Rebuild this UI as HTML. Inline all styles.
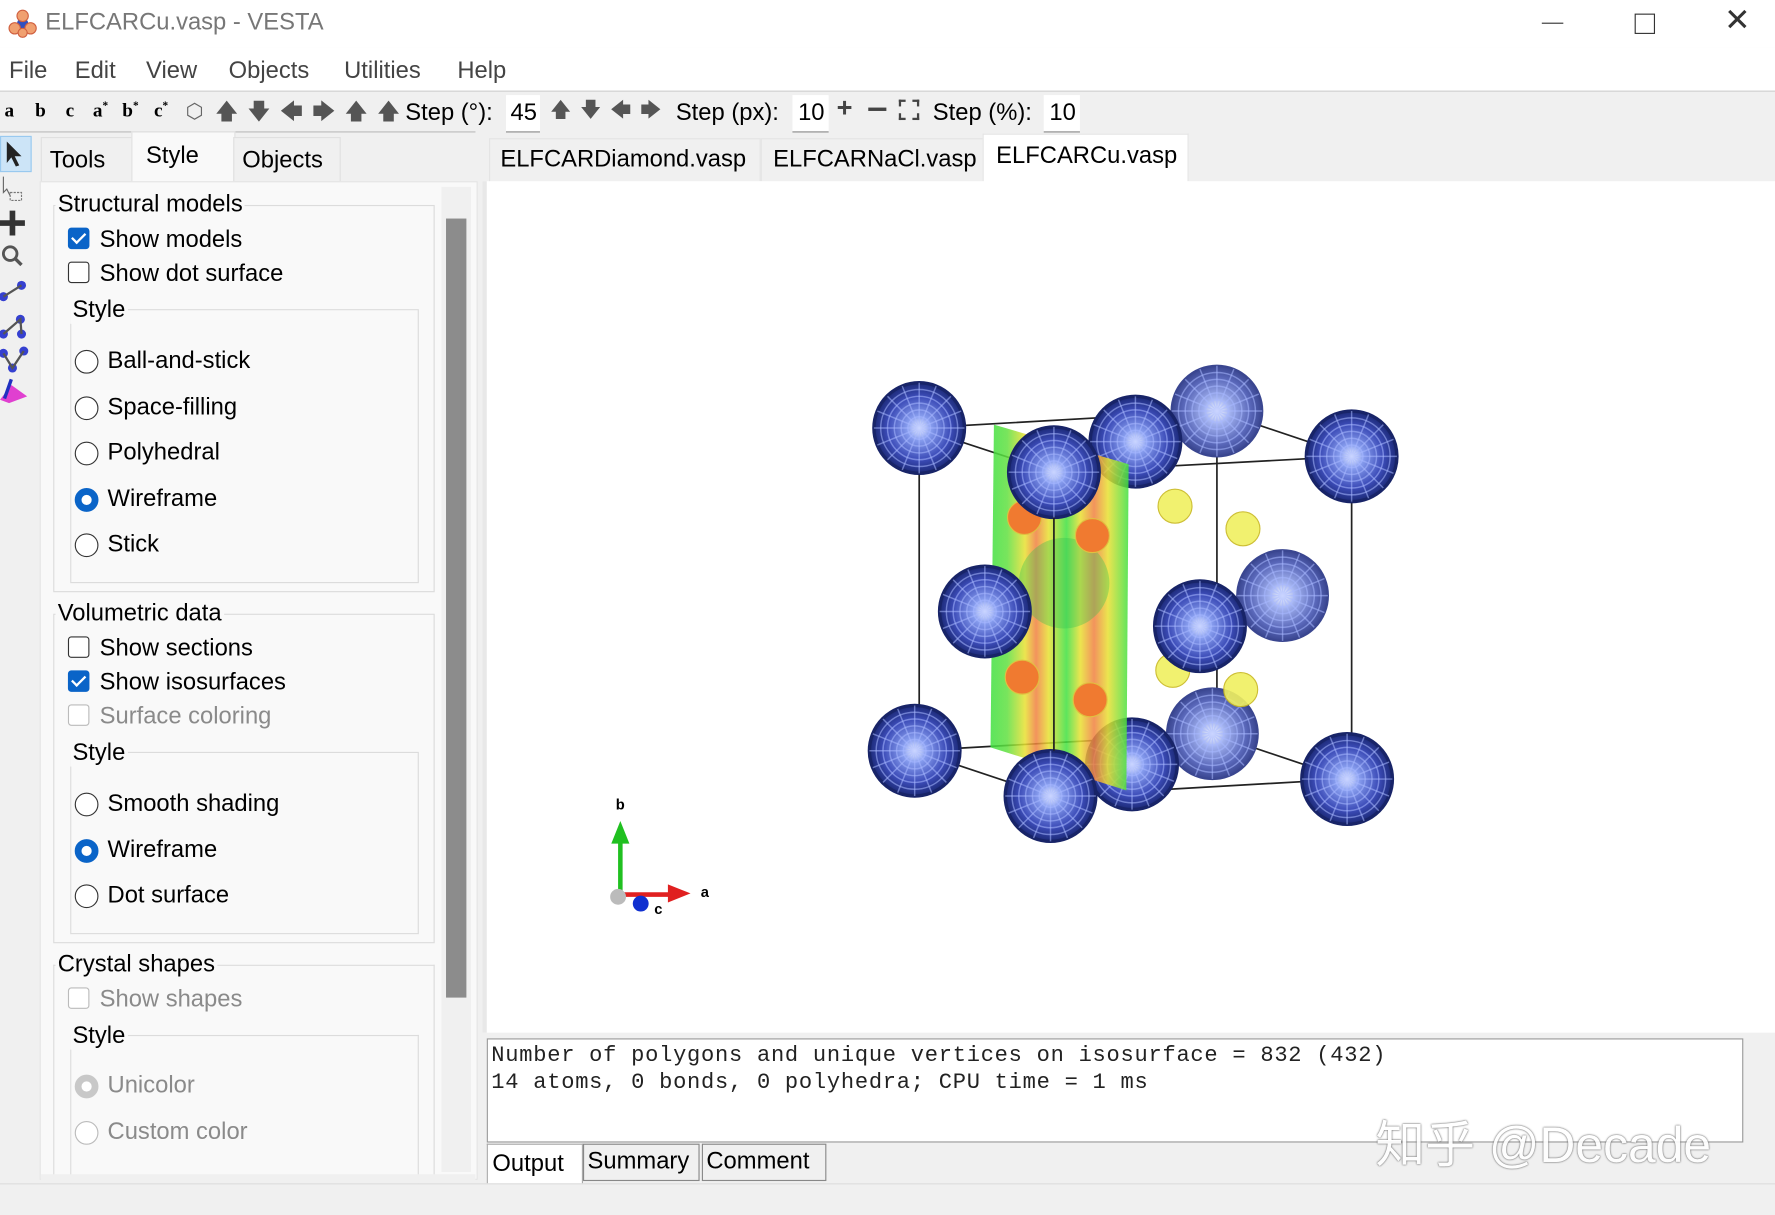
<!DOCTYPE html>
<html><head><meta charset="utf-8"><style>
html,body{margin:0;padding:0;width:1775px;height:1215px;overflow:hidden;background:#f0f0f0}
#s{position:absolute;left:0;top:0;width:1568px;height:1073px;transform:scale(1.13202,1.13234);transform-origin:0 0;font-family:"Liberation Sans",sans-serif;color:#000;background:#f0f0f0}
.a{position:absolute;white-space:nowrap}
.t{font-size:21px}
.cb{position:absolute;width:19px;height:19px;border:1.5px solid #333;border-radius:3px;background:#fff;box-sizing:border-box}
.cb.on{background:#0a64c8;border-color:#0a64c8}
.cb.on:after{content:"";position:absolute;left:5px;top:1px;width:5px;height:10px;border:solid #fff;border-width:0 2px 2px 0;transform:rotate(45deg)}
.cb.dis{border-color:#bbb}
.rb{position:absolute;width:21px;height:21px;border:1.5px solid #333;border-radius:50%;background:#fff;box-sizing:border-box}
.rb.on{border:6px solid #0a64c8}
.rb.dis{border-color:#bbb}
.rb.dison{border:6px solid #c8c8c8}
.gb{position:absolute;border:1px solid #dcdcdc}
.g{color:#8a8a8a}
.tb{font-family:"Liberation Serif",serif;font-weight:bold;font-size:17px}
</style></head><body><div id="s">
<div class="a" style="left:0;top:0;width:1568px;height:42px;background:#fff"></div>
<svg class="a" style="left:6px;top:8px" width="28" height="26"><circle cx="14" cy="13" r="5" fill="#3050c0"/><circle cx="7" cy="17" r="5" fill="#f0a070" stroke="#d06040"/><circle cx="21" cy="17" r="5" fill="#f0a070" stroke="#d06040"/><circle cx="14" cy="6" r="5" fill="#f0a070" stroke="#d06040"/><circle cx="14" cy="21" r="4" fill="#f0a070" stroke="#d06040"/></svg>
<div class="a t" style="left:40px;top:8px;color:#777">ELFCARCu.vasp - VESTA</div>
<div class="a" style="left:1362px;top:20px;width:19px;height:1px;background:#333"></div>
<div class="a" style="left:1444px;top:12px;width:16px;height:16px;border:1px solid #333"></div>
<div class="a" style="left:1523px;top:1px;font-size:28px;font-weight:100;color:#333">✕</div>
<div class="a" style="left:0;top:42px;width:1568px;height:38px;background:#fff;border-bottom:1px solid #ccc"></div>
<div class="a t" style="left:8px;top:51px;color:#444">File</div>
<div class="a t" style="left:66px;top:51px;color:#444">Edit</div>
<div class="a t" style="left:129px;top:51px;color:#444">View</div>
<div class="a t" style="left:202px;top:51px;color:#444">Objects</div>
<div class="a t" style="left:304px;top:51px;color:#444">Utilities</div>
<div class="a t" style="left:404px;top:51px;color:#444">Help</div>
<div class="a tb" style="left:4px;top:88px">a</div><div class="a tb" style="left:31px;top:88px">b</div><div class="a tb" style="left:58px;top:88px">c</div><div class="a tb" style="left:82px;top:88px">a<sup style="font-size:10px">*</sup></div><div class="a tb" style="left:108px;top:88px">b<sup style="font-size:10px">*</sup></div><div class="a tb" style="left:136px;top:88px">c<sup style="font-size:10px">*</sup></div>
<div class="a" style="left:164px;top:88px;font-size:18px;color:#666">⬡</div>
<div class="a" style="left:190px;top:84px;font-size:20px;color:#555;letter-spacing:8px">🡅🡇🡄🡆🡅🡅</div>
<div class="a t" style="left:358px;top:88px">Step (°):</div>
<div class="a" style="left:447px;top:84px;width:30px;height:32px;background:#fff;border-bottom:1px solid #888"></div>
<div class="a t" style="left:451px;top:88px">45</div>
<div class="a" style="left:486px;top:85px;font-size:18px;color:#555;letter-spacing:8px">🡅🡇🡄🡆</div>
<div class="a t" style="left:597px;top:88px">Step (px):</div>
<div class="a" style="left:700px;top:84px;width:32px;height:32px;background:#fff;border-bottom:1px solid #888"></div>
<div class="a t" style="left:705px;top:88px">10</div>
<div class="a" style="left:739px;top:82px;font-size:24px;font-weight:bold;color:#444">+</div>
<div class="a" style="left:767px;top:95px;width:16px;height:3px;background:#444"></div>
<div class="a" style="left:794px;top:88px;width:14px;height:14px;border:2px dashed #444"></div>
<div class="a t" style="left:824px;top:88px">Step (%):</div>
<div class="a" style="left:922px;top:84px;width:32px;height:32px;background:#fff;border-bottom:1px solid #888"></div>
<div class="a t" style="left:927px;top:88px">10</div>
<div class="a" style="left:0;top:116px;width:420px;height:1px;background:#bbb"></div>
<div class="a" style="left:0;top:120px;width:26px;height:30px;background:#cce4f7;border:1px solid #99c9ef"></div>
<svg class="a" style="left:0;top:120px" width="28" height="240">
<path d="M6 5 L6 24 L10 19 L14 27 L17 26 L13 18 L19 18 Z" fill="#222"/>
<path d="M3 36 L3 50 L6 47 L9 53" fill="none" stroke="#666"/>
<rect x="9" y="50" width="10" height="7" fill="none" stroke="#777" stroke-dasharray="2 1"/>
<path d="M11 66 L11 88 M0 77 L22 77" stroke="#333" stroke-width="5"/>
<circle cx="9" cy="104" r="6" fill="none" stroke="#555" stroke-width="2.5"/><path d="M13 108 L19 114" stroke="#555" stroke-width="3"/>
<circle cx="3" cy="142" r="4" fill="#3540d0"/><circle cx="19" cy="132" r="4" fill="#3540d0"/><path d="M3 142 L19 132" stroke="#555" stroke-width="2"/>
<circle cx="3" cy="175" r="4" fill="#3540d0"/><circle cx="19" cy="175" r="4" fill="#3540d0"/><circle cx="18" cy="162" r="4" fill="#3540d0"/><path d="M3 175 L18 162 L19 175" stroke="#555" fill="none" stroke-width="2"/>
<circle cx="3" cy="192" r="4" fill="#3540d0"/><circle cx="21" cy="190" r="4" fill="#3540d0"/><circle cx="11" cy="205" r="4" fill="#3540d0"/><path d="M3 192 L11 205 L21 190" stroke="#555" fill="none" stroke-width="2"/>
<path d="M0 233 L10 220 L24 230 L8 236 Z" fill="#e040d0"/><path d="M4 232 L10 215" stroke="#2030c0" stroke-width="3"/>
</svg>
<div class="a" style="left:36px;top:121px;width:80px;height:38px;background:#f0f0f0;border:1px solid #e0e0e0"></div>
<div class="a t" style="left:44px;top:130px">Tools</div>
<div class="a" style="left:116px;top:116px;width:90px;height:45px;background:#f9f9f9;border:1px solid #e0e0e0;border-bottom:none"></div>
<div class="a t" style="left:129px;top:126px">Style</div>
<div class="a" style="left:206px;top:121px;width:93px;height:38px;background:#f0f0f0;border:1px solid #e0e0e0"></div>
<div class="a t" style="left:214px;top:130px">Objects</div>
<div class="a" style="left:35px;top:160px;width:385px;height:880px;background:#f9f9f9;border:1px solid #e4e4e4"></div>
<div class="a" style="left:390px;top:165px;width:26px;height:870px;background:#f0f0f0"></div>
<div class="a" style="left:394px;top:193px;width:18px;height:688px;background:#8c8c8c"></div>
<div class="gb" style="left:47px;top:181px;width:335px;height:340px"></div>
<div class="a t" style="left:49px;top:169px;background:#f9f9f9;padding:0 2px">Structural models</div>
<div class="cb on" style="left:60px;top:201px"></div><div class="a t" style="left:88px;top:200px">Show models</div>
<div class="cb" style="left:60px;top:231px"></div><div class="a t" style="left:88px;top:230px">Show dot surface</div>
<div class="gb" style="left:62px;top:273px;width:306px;height:240px"></div>
<div class="a t" style="left:62px;top:262px;background:#f9f9f9;padding:0 2px">Style</div>
<div class="rb" style="left:66px;top:309px"></div><div class="a t" style="left:95px;top:307px">Ball-and-stick</div>
<div class="rb" style="left:66px;top:350px"></div><div class="a t" style="left:95px;top:348px">Space-filling</div>
<div class="rb" style="left:66px;top:390px"></div><div class="a t" style="left:95px;top:388px">Polyhedral</div>
<div class="rb on" style="left:66px;top:431px"></div><div class="a t" style="left:95px;top:429px">Wireframe</div>
<div class="rb" style="left:66px;top:471px"></div><div class="a t" style="left:95px;top:469px">Stick</div>
<div class="gb" style="left:47px;top:542px;width:335px;height:289px"></div>
<div class="a t" style="left:49px;top:530px;background:#f9f9f9;padding:0 2px">Volumetric data</div>
<div class="cb" style="left:60px;top:562px"></div><div class="a t" style="left:88px;top:561px">Show sections</div>
<div class="cb on" style="left:60px;top:592px"></div><div class="a t" style="left:88px;top:591px">Show isosurfaces</div>
<div class="cb dis" style="left:60px;top:622px"></div><div class="a t g" style="left:88px;top:621px">Surface coloring</div>
<div class="gb" style="left:62px;top:664px;width:306px;height:159px"></div>
<div class="a t" style="left:62px;top:653px;background:#f9f9f9;padding:0 2px">Style</div>
<div class="rb" style="left:66px;top:700px"></div><div class="a t" style="left:95px;top:698px">Smooth shading</div>
<div class="rb on" style="left:66px;top:741px"></div><div class="a t" style="left:95px;top:739px">Wireframe</div>
<div class="rb" style="left:66px;top:781px"></div><div class="a t" style="left:95px;top:779px">Dot surface</div>
<div class="gb" style="left:47px;top:852px;width:335px;height:190px;border-bottom:none"></div>
<div class="a t" style="left:49px;top:840px;background:#f9f9f9;padding:0 2px">Crystal shapes</div>
<div class="cb dis" style="left:60px;top:872px"></div><div class="a t g" style="left:88px;top:871px">Show shapes</div>
<div class="gb" style="left:62px;top:914px;width:306px;height:130px;border-bottom:none"></div>
<div class="a t" style="left:62px;top:903px;background:#f9f9f9;padding:0 2px">Style</div>
<div class="rb dison" style="left:66px;top:949px"></div><div class="a t g" style="left:95px;top:947px">Unicolor</div>
<div class="rb dis" style="left:66px;top:990px"></div><div class="a t g" style="left:95px;top:988px">Custom color</div>
<div class="a" style="left:36px;top:1037px;width:384px;height:8px;background:#f0f0f0"></div>
<div class="a" style="left:432px;top:122px;width:238px;height:38px;background:#f0f0f0;border:1px solid #e4e4e4"></div>
<div class="a t" style="left:442px;top:129px">ELFCARDiamond.vasp</div>
<div class="a" style="left:672px;top:122px;width:195px;height:38px;background:#f0f0f0;border:1px solid #e4e4e4"></div>
<div class="a t" style="left:683px;top:129px">ELFCARNaCl.vasp</div>
<div class="a" style="left:868px;top:118px;width:180px;height:43px;background:#fff;border:1px solid #e4e4e4;border-bottom:none"></div>
<div class="a t" style="left:880px;top:126px">ELFCARCu.vasp</div>
<div class="a" style="left:426px;top:160px;width:1142px;height:752px;background:#fff;border-left:4px solid #e8e8e8"></div>
<svg class="a" style="left:430px;top:160px" width="1138" height="750" viewBox="430 160 1138 750">
<defs>
<radialGradient id="sp" cx="0.5" cy="0.5" r="0.5"><stop offset="0" stop-color="#f4f8ff"/><stop offset="0.25" stop-color="#8aa0f0"/><stop offset="0.7" stop-color="#3c4cb8"/><stop offset="1" stop-color="#1c2a78"/></radialGradient>
<radialGradient id="spf" cx="0.5" cy="0.5" r="0.5"><stop offset="0" stop-color="#f4f8ff"/><stop offset="0.3" stop-color="#a0b0ee"/><stop offset="0.75" stop-color="#5866b8"/><stop offset="1" stop-color="#3a4690"/></radialGradient>
<linearGradient id="pl" x1="0" y1="0" x2="1" y2="0"><stop offset="0" stop-color="#40e040"/><stop offset="0.12" stop-color="#60e040"/><stop offset="0.25" stop-color="#e8e030"/><stop offset="0.33" stop-color="#f08040"/><stop offset="0.42" stop-color="#e8e030"/><stop offset="0.55" stop-color="#40e040"/><stop offset="0.65" stop-color="#e8e030"/><stop offset="0.75" stop-color="#f08040"/><stop offset="0.85" stop-color="#e8e030"/><stop offset="1" stop-color="#40e040"/></linearGradient>
<g id="grid" fill="none" stroke="#a8b8ff" stroke-opacity="0.55" stroke-width="1.3"><circle r="34"/><circle r="28"/><circle r="22"/><circle r="16"/><circle r="10"/><path d="M-40 0H40M0-40V40M-28-28L28 28M-28 28L28-28M-37-15L37 15M-37 15L37-15M-15-37L15 37M15-37L-15 37"/></g>
<g id="w"><circle r="40" fill="url(#sp)" stroke="#182468" stroke-width="3"/><use href="#grid"/></g>
<g id="wf"><circle r="40" fill="url(#spf)" stroke="#3a4690" stroke-width="2"/><use href="#grid"/></g>
</defs>
<g stroke="#222" stroke-width="1.5" fill="none">
<path d="M812 378 L1075 363 L1194 403 L931 417 Z"/>
<path d="M808 663 L1071 648 L1190 688 L928 703 Z"/>
<path d="M812 378V663 M1075 363V648 M1194 403V688 M931 417V703"/>
</g>
<use href="#wf" x="1075" y="363"/>
<use href="#wf" x="1133" y="526"/>
<use href="#wf" x="1071" y="648"/>
<use href="#w" x="812" y="378"/>
<use href="#w" x="1003" y="390"/>
<use href="#w" x="1194" y="403"/>
<use href="#w" x="1000" y="675"/>
<g fill="#f0f060" stroke="#c8b820" opacity="0.9"><circle cx="1038" cy="447" r="15"/><circle cx="1098" cy="467" r="15"/><circle cx="1036" cy="592" r="15"/><circle cx="1096" cy="609" r="15"/></g>
<polygon points="878,375 997,410 995,698 875,660" fill="url(#pl)" opacity="0.85"/>
<circle cx="940" cy="515" r="40" fill="#30c050" opacity="0.35"/>
<g fill="#f07a30" stroke="#e0c040"><circle cx="905" cy="457" r="15"/><circle cx="965" cy="473" r="15"/><circle cx="903" cy="598" r="15"/><circle cx="963" cy="618" r="15"/></g>
<use href="#w" x="931" y="417"/>
<use href="#w" x="870" y="540"/>
<use href="#w" x="1060" y="553"/>
<use href="#w" x="808" y="663"/>
<use href="#w" x="1190" y="688"/>
<use href="#w" x="928" y="703"/>
<path d="M931 457V663" stroke="#222" stroke-width="1.5"/>
<path d="M548 790 V735" stroke="#20c020" stroke-width="4"/><path d="M540 745 L548 725 L556 745Z" fill="#20c020"/>
<path d="M548 790 H595" stroke="#e02020" stroke-width="4"/><path d="M590 781 L610 789 L590 797Z" fill="#e02020"/>
<circle cx="546" cy="792" r="7" fill="#bbb"/><circle cx="566" cy="798" r="7" fill="#1030d0"/>
<text x="544" y="715" font-size="13" font-weight="bold" font-family="Liberation Sans">b</text>
<text x="619" y="792" font-size="13" font-weight="bold" font-family="Liberation Sans">a</text>
<text x="578" y="807" font-size="13" font-weight="bold" font-family="Liberation Sans">c</text>
</svg>
<div class="a" style="left:430px;top:917px;width:1108px;height:90px;background:#fff;border:1px solid #999"></div>
<div class="a" style="left:434px;top:920px;font-family:'Liberation Mono',monospace;font-size:19.5px;letter-spacing:0.65px;line-height:24px;color:#222">Number of polygons and unique vertices on isosurface = 832 (432)<br>14 atoms, 0 bonds, 0 polyhedra; CPU time = 1 ms</div>
<div class="a" style="left:1215px;top:975px;font-family:'Liberation Sans','Noto Sans CJK SC',sans-serif;font-size:44px;color:#fff;text-shadow:0 0 2px #666,0 0 1px #666;opacity:0.9">知乎 @Decade</div>
<div class="a" style="left:430px;top:1010px;width:83px;height:34px;background:#fff;border:1px solid #aaa;border-bottom:none"></div>
<div class="a t" style="left:435px;top:1016px">Output</div>
<div class="a" style="left:515px;top:1010px;width:101px;height:31px;background:#f0f0f0;border:1px solid #888"></div>
<div class="a t" style="left:519px;top:1014px">Summary</div>
<div class="a" style="left:620px;top:1010px;width:108px;height:31px;background:#f0f0f0;border:1px solid #888"></div>
<div class="a t" style="left:624px;top:1014px">Comment</div>
<div class="a" style="left:0;top:1045px;width:1568px;height:1px;background:#ddd"></div>
</div></body></html>
